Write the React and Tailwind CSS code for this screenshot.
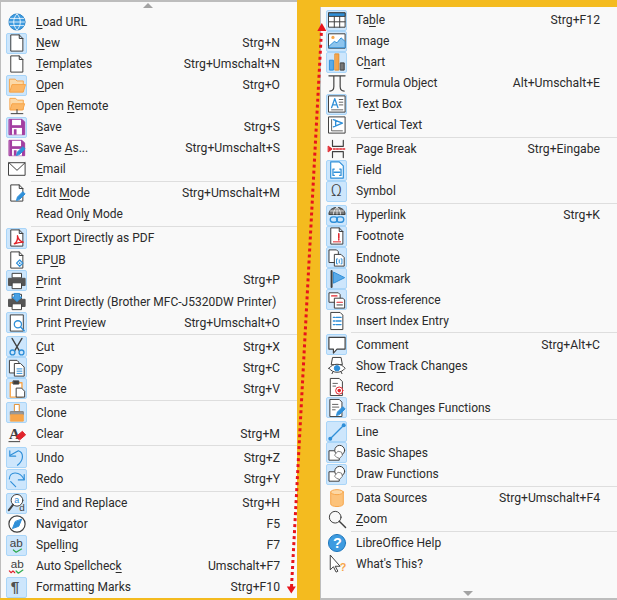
import React from 'react';

const D = '#404040';
const B = '#2f8fd8';
const O = '#f7a54a';
const P = '#a33ea1';
const R = '#e0242c';

const Ic = ({ children }) => (
  <svg className="shrink-0 overflow-visible" width="18" height="18" viewBox="0 0 20 20" fill="none" stroke={D} strokeWidth="1.100" strokeLinejoin="round" strokeLinecap="round">
    {children}
  </svg>
);

const Doc = () => <path d="M3.500 1h9l4 4v14h-13zM12.500 1v4h4" fill="#fff" />;
const Pencil = () => <path d="M9.500 18l1-3.500 6-6 2.500 2.500-6 6z" fill={B} stroke={B} />;
const Floppy = () => (
  <>
    <path d="M1.500 1.500h14l3 3v14h-17z" fill={P} stroke={P} />
    <rect x="4.500" y="2" width="10" height="6" fill="#fff" stroke="none" />
    <rect x="4.500" y="11" width="11" height="7.500" fill="#fff" stroke="none" />
    <rect x="6.500" y="12.500" width="3" height="6" fill={P} stroke="none" />
  </>
);
const Printer = () => (
  <>
    <path d="M5 1.500h10v5h-10z" fill="#fff" />
    <path d="M1 7h18v8h-3.500v-3h-11v3h-3.500z" fill="#555" stroke="#555" />
    <path d="M5 12h10v6.500h-10z" fill="#fff" />
  </>
);
const Shapes = () => (
  <>
    <rect x="1.500" y="7.500" width="11" height="10.500" fill="#fff" />
    <circle cx="13" cy="7" r="5.500" fill="#fff" />
    <path d="M7.500 12l3.500-4 4 1 1 3.500-3 3.500-3-1z" fill="#fff" stroke={D} strokeWidth=".7" />
  </>
);

const icons = {
  globe: (
    <Ic>
      <circle cx="10" cy="10" r="9" fill="#3d9be0" stroke="#2f86c8" />
      <path d="M1 10h18M2.500 6h15M2.500 14h15M10 1c-5 5-5 13 0 18M10 1c5 5 5 13 0 18" stroke="#fff" strokeWidth=".9" />
    </Ic>
  ),
  doc: <Ic><Doc /></Ic>,
  open: (
    <Ic>
      <path d="M2 3.500h6l2 2h7v12h-15z" fill="#fbd9a8" stroke={O} />
      <path d="M2 17.500l2.500-8h15l-2.500 8z" fill="#fcb766" stroke={O} />
    </Ic>
  ),
  remote: (
    <Ic>
      <path d="M2.500 1.500h6l2 2h6.500v10.500h-14.500z" fill="#fbd9a8" stroke={O} />
      <path d="M2.500 14l2-6.500h14l-2 6.500z" fill="#fcb766" stroke={O} />
      <path d="M10 14v4M3.500 18.500h13" stroke={D} />
    </Ic>
  ),
  save: <Ic><Floppy /></Ic>,
  saveas: <Ic><Floppy /><Pencil /></Ic>,
  email: (
    <Ic>
      <path d="M1 3h18v14h-18z" fill="#fff" />
      <path d="M1 3l9 8.500 9-8.500" />
    </Ic>
  ),
  edit: <Ic><Doc /><Pencil /></Ic>,
  pdf: (
    <Ic>
      <Doc />
      <path d="M7 16.500c3-2 4-5 3.500-9 1 4 3 6.500 6.500 7-3.500 0-6.500 .5-10 2z" stroke={R} strokeWidth="1.400" />
    </Ic>
  ),
  epub: (
    <Ic>
      <Doc />
      <path d="M13 10l3.500 3.500-3.500 3.500-3.500-3.500z" fill="#fff" stroke={B} strokeWidth="1.400" />
      <circle cx="13" cy="13.500" r="1" fill={B} stroke="none" />
    </Ic>
  ),
  print: <Ic><Printer /></Ic>,
  printd: (
    <Ic>
      <Printer />
      <path d="M7 .5h6v4h2.500l-5.500 5-5.500-5h2.500z" fill="#4aa0e2" stroke={B} />
    </Ic>
  ),
  preview: (
    <Ic>
      <path d="M3 1h14v18h-14z" fill="#fff" />
      <circle cx="11" cy="11.500" r="4" fill="#fff" stroke={B} strokeWidth="1.400" />
      <path d="M14 14.500l4 4" stroke={B} strokeWidth="1.600" />
    </Ic>
  ),
  cut: (
    <Ic>
      <path d="M4.500 .5l8 13.500M15.500 .5l-8 13.500" strokeWidth="1.500" />
      <circle cx="5" cy="16" r="2.700" stroke={B} strokeWidth="1.500" />
      <circle cx="15" cy="16" r="2.700" stroke={B} strokeWidth="1.500" />
    </Ic>
  ),
  copy: (
    <Ic>
      <path d="M2 1.500h8l2 2v12h-10z" fill="#fff" />
      <path d="M7.500 5h6.500l4 4v10h-10.500z" fill="#fff" />
      <path d="M10 11h5.500M10 13.500h5.500M10 16h5.500" stroke={B} />
    </Ic>
  ),
  paste: (
    <Ic>
      <path d="M2.500 3h13v16h-13z" fill="#fff" stroke={O} strokeWidth="1.500" />
      <path d="M6 1h6v3.500h-6z" fill={D} stroke={D} />
      <path d="M9.500 9h5.500l3.500 3.500v6.500h-9z" fill="#fff" />
    </Ic>
  ),
  clone: (
    <Ic>
      <path d="M7.500 .5h5v8h-5z" fill="#fff" stroke="#e58f2e" />
      <path d="M3 8.500h14v3.500h-14z" fill="#9a9a9a" stroke="#808080" />
      <path d="M3 12h14v7h-14z" fill={O} stroke={O} />
    </Ic>
  ),
  clear: (
    <Ic>
      <text x="1" y="15" fontFamily="Liberation Serif" fontSize="17" fontWeight="700" fill={D} stroke="none">A</text>
      <path d="M9.500 12.500l6.500-5.500 3.500 4-6.500 5.500z" fill={R} stroke={R} />
      <path d="M1 18.500h12" />
    </Ic>
  ),
  undo: (
    <Ic>
      <path d="M2.500 7l9-5c6 2 6.500 10-1 16" stroke={B} strokeWidth="1.300" />
      <path d="M2 2v6h6.500" stroke={B} strokeWidth="1.300" />
    </Ic>
  ),
  redo: (
    <Ic>
      <path d="M1.500 10c0-8 11-10 16.500 .5" stroke={B} strokeWidth="1.300" />
      <path d="M18 5v6h-6.500" stroke={B} strokeWidth="1.300" />
      <path d="M3 13l5.500 5.500" stroke={B} strokeWidth="1.300" />
    </Ic>
  ),
  find: (
    <Ic>
      <circle cx="10" cy="7" r="6.500" fill="#fff" />
      <path d="M5.500 12l-4.500 6" strokeWidth="2.200" />
      <text x="7" y="10.500" fontFamily="Liberation Sans" fontSize="10" fill={B} stroke="none">a</text>
      <text x="12.500" y="19" fontFamily="Liberation Sans" fontSize="11" fill={D} stroke="none">d</text>
    </Ic>
  ),
  nav: (
    <Ic>
      <circle cx="10" cy="10" r="9" fill="#fff" strokeWidth="1.300" />
      <path d="M15 5l-3 7.500-7 2.500 3-7.500z" fill={B} stroke={B} />
    </Ic>
  ),
  spell: (
    <Ic>
      <text x="2" y="12" fontFamily="Liberation Sans" fontSize="13" fill={D} stroke="none">ab</text>
      <path d="M6 15.500l3 2.500 6-3.500" stroke="#2eab4f" strokeWidth="1.400" />
    </Ic>
  ),
  auto: (
    <Ic>
      <text x="3" y="12" fontFamily="Liberation Sans" fontSize="13" fill={D} stroke="none">ab</text>
      <path d="M1.500 15.500l2 2 2-2 2 2" stroke={R} strokeWidth="1.300" />
      <path d="M9 15.500l2.500 2.500 5-3.500" stroke="#2eab4f" strokeWidth="1.400" />
    </Ic>
  ),
  marks: (
    <Ic>
      <text x="3" y="16" fontFamily="Liberation Sans" fontSize="17" fontWeight="700" fill="#505050" stroke="none">¶</text>
    </Ic>
  ),
  table: (
    <Ic>
      <path d="M1 2h18v16h-18z" fill="#fff" />
      <path d="M1 2h18v4h-18z" fill={B} stroke={D} />
      <path d="M1 12h18M7 6v12M13 6v12" />
    </Ic>
  ),
  image: (
    <Ic>
      <path d="M1 2h18v16h-18z" fill="#fff" />
      <circle cx="5.500" cy="6" r="1.800" fill={O} stroke="none" />
      <path d="M1.500 15.500l5.500-5 3 1.500 4.500-5.500 4.500 4v7h-17.500z" fill="#8cc4ee" stroke={B} />
    </Ic>
  ),
  chart: (
    <Ic>
      <path d="M2 8h4v11h-4z" fill="#5aaae8" stroke={B} />
      <path d="M8 1h4v18h-4z" fill={O} stroke="#e58f2e" />
      <path d="M14 11h4v8h-4z" fill="#777" stroke={D} />
    </Ic>
  ),
  formula: (
    <Ic>
      <path d="M1 2h18M6.500 2v12c0 3.500-1.500 5-4.500 5M13.500 2v12c0 3.500 1.500 5 4.500 5" strokeWidth="1.300" />
    </Ic>
  ),
  textbox: (
    <Ic>
      <path d="M1 1h18v18h-18z" fill="#fff" />
      <path d="M4 14l3.500-10 3.500 10M5 11h5" stroke={B} strokeWidth="1.500" />
      <path d="M12.500 5h4M12.500 8h4M12.500 11h4M4 16.500h12.500" stroke={D} strokeWidth=".9" />
    </Ic>
  ),
  vertical: (
    <Ic>
      <path d="M1 1h18v18h-18z" fill="#fff" />
      <path d="M6 4l10 4-10 4M8.500 5v6" stroke={B} strokeWidth="1.500" />
      <path d="M4 4v12.500h12" stroke={D} strokeWidth=".9" />
    </Ic>
  ),
  pagebreak: (
    <Ic>
      <path d="M5 .5v6.500h12v-6.500M5 19.500v-6.500h12v6.500" strokeWidth="1.300" />
      <path d="M6 10h13" stroke={R} strokeWidth="1.600" strokeDasharray="2 1.500" />
      <path d="M.5 7l4 3-4 3z" fill={R} stroke={R} />
    </Ic>
  ),
  field: (
    <Ic>
      <path d="M3 1h9.500l4.500 4.500v13.500h-14z" fill="#fff" stroke={B} strokeWidth="1.300" />
      <path d="M7 9h-1.500v7h1.500M13 9h1.500v7h-1.500M7 12.500h6" stroke={B} strokeWidth="1.400" />
    </Ic>
  ),
  symbol: (
    <Ic>
      <text x="3" y="16" fontFamily="Roboto" fontWeight="300" fontSize="19" fill={D} stroke="none">Ω</text>
    </Ic>
  ),
  link: (
    <Ic>
      <path d="M1 9c0-10 18-10 18 0z" fill="#777" stroke={D} />
      <path d="M10 1v8M6 9c0-4 2.500-6 4-8 1.500 2 4 4 4 8M2.500 5.500h15" stroke="#fff" strokeWidth=".8" />
      <rect x="2.500" y="12" width="8" height="6" rx="3" stroke={B} strokeWidth="1.500" />
      <rect x="9.500" y="12" width="8" height="6" rx="3" stroke={B} strokeWidth="1.500" />
    </Ic>
  ),
  footnote: (
    <Ic>
      <Doc />
      <path d="M12 7.500v5M12 14v.5" stroke={R} strokeWidth="1.700" />
      <path d="M6 16.500h8" stroke={R} />
    </Ic>
  ),
  endnote: (
    <Ic>
      <path d="M1.500 1h8l2 2v12h-10z" fill="#fff" />
      <path d="M7.500 6h7l3.500 3.500v9.500h-10.500z" fill="#fff" />
      <path d="M10.500 11h-1v5.500h1M14.500 11h1v5.500h-1M12.500 12v3.500" stroke={B} />
    </Ic>
  ),
  bookmark: (
    <Ic>
      <path d="M4 1v18" strokeWidth="2.200" />
      <path d="M6.500 2.500l12 6-12 6z" fill="#5aaae8" stroke={B} />
    </Ic>
  ),
  crossref: (
    <Ic>
      <path d="M1.500 2h10l2 2v8.500h-12z" fill="#fff" />
      <path d="M7.500 8h9l2 2v9h-11z" fill="#fff" />
      <path d="M4 5.500h6M10 12.500h6" stroke={R} strokeWidth="1.300" />
      <path d="M10 15.500h6" stroke={D} />
    </Ic>
  ),
  index: (
    <Ic>
      <path d="M3.500 .5h10l3 3v16h-13z" fill="#fff" />
      <path d="M6 6h1.500M9 6h5.500M6 10h1.500M9 10h5.500M6 14h1.500M9 14h5.500" stroke={B} strokeWidth="1.500" />
    </Ic>
  ),
  comment: (
    <Ic>
      <path d="M1 1.500h18v13h-9l-4 4.500v-4.500h-5z" fill="#fff" strokeWidth="1.300" />
    </Ic>
  ),
  showtrack: (
    <Ic>
      <path d="M5.500 .5h9l1.500 8h-12z" fill="#fff" />
      <path d="M1 12.500c4.500-6 13.500-6 18 0-4.500 6-13.500 6-18 0z" fill="#fff" />
      <circle cx="10" cy="12.500" r="3" fill={B} stroke={B} />
      <path d="M4.500 18.500l1-2M15.500 18.500l-1-2" />
    </Ic>
  ),
  record: (
    <Ic>
      <path d="M3 .5h9.500l3.500 3.500v15.500h-13z" fill="#fff" />
      <path d="M5.500 6h5M5.500 9h3" stroke={D} strokeWidth=".9" />
      <circle cx="12.500" cy="14" r="4" fill="#fff" stroke={R} />
      <circle cx="12.500" cy="14" r="2" fill={R} stroke="none" />
    </Ic>
  ),
  trackfn: (
    <Ic>
      <path d="M2.500 .5h10l3 3v16h-13z" fill="#fff" />
      <path d="M5 6h6M5 9h7M5 12h3" stroke={D} strokeWidth=".9" />
      <Pencil />
    </Ic>
  ),
  line: (
    <Ic>
      <path d="M2.500 17.500l15-15" stroke={B} strokeWidth="1.500" />
      <circle cx="2.500" cy="17.500" r="2.200" fill={B} stroke="none" />
      <circle cx="17.500" cy="2.500" r="2.200" fill={B} stroke="none" />
    </Ic>
  ),
  shapes: <Ic><Shapes /></Ic>,
  data: (
    <Ic>
      <path d="M3 3.500v13c0 4 14 4 14 0v-13z" fill="#fcc27a" stroke={O} />
      <ellipse cx="10" cy="3.500" rx="7" ry="2.800" fill="#fdd7a3" stroke={O} />
    </Ic>
  ),
  zoom: (
    <Ic>
      <circle cx="8" cy="8" r="6.500" />
      <path d="M12.500 12.500l7 7" strokeWidth="1.600" />
    </Ic>
  ),
  help: (
    <Ic>
      <circle cx="10" cy="10" r="9.500" fill="#3d9be0" stroke="#1f76bb" />
      <text x="5.500" y="15.500" fontFamily="Liberation Sans" fontSize="16" fontWeight="700" fill="#fff" stroke="none">?</text>
    </Ic>
  ),
  whats: (
    <Ic>
      <path d="M2.500 .5v16l3.500-3.500 3 6 2-1-3-5.500h5z" fill="#fff" />
      <text x="13" y="18" fontFamily="Liberation Sans" fontSize="12" fontWeight="700" fill={O} stroke="none">?</text>
    </Ic>
  ),
};

// a leading _ marks the mnemonic letter
const leftMenu = [
  [
    { t: '_Load URL', i: 'globe' },
    { t: '_New', k: 'Strg+N', i: 'doc', on: true },
    { t: '_Templates', k: 'Strg+Umschalt+N', i: 'doc' },
    { t: '_Open', k: 'Strg+O', i: 'open', on: true },
    { t: 'Open _Remote', i: 'remote' },
    { t: '_Save', k: 'Strg+S', i: 'save', on: true },
    { t: 'Save _As...', k: 'Strg+Umschalt+S', i: 'saveas' },
    { t: '_Email', i: 'email' },
  ],
  [
    { t: 'Edit _Mode', k: 'Strg+Umschalt+M', i: 'edit' },
    { t: 'Read Onl_y Mode' },
  ],
  [
    { t: 'Export _Directly as PDF', i: 'pdf', on: true },
    { t: 'EP_UB', i: 'epub' },
    { t: '_Print', k: 'Strg+P', i: 'print', on: true },
    { t: 'Print Directly (Brother MFC-J5320DW Printer)', i: 'printd' },
    { t: 'Print Pre_view', k: 'Strg+Umschalt+O', i: 'preview', on: true },
  ],
  [
    { t: '_Cut', k: 'Strg+X', i: 'cut', on: true },
    { t: 'Copy', k: 'Strg+C', i: 'copy', on: true },
    { t: 'Paste', k: 'Strg+V', i: 'paste', on: true },
  ],
  [
    { t: 'Clone', i: 'clone', on: true },
    { t: 'Clear', k: 'Strg+M', i: 'clear' },
  ],
  [
    { t: 'Undo', k: 'Strg+Z', i: 'undo', on: true },
    { t: 'Redo', k: 'Strg+Y', i: 'redo', on: true },
  ],
  [
    { t: '_Find and Replace', k: 'Strg+H', i: 'find', on: true },
    { t: 'Navi_gator', k: 'F5', i: 'nav' },
    { t: 'Spell_ing', k: 'F7', i: 'spell', on: true },
    { t: 'Auto Spellchec_k', k: 'Umschalt+F7', i: 'auto' },
    { t: 'Formatting Marks', k: 'Strg+F10', i: 'marks', on: true },
  ],
];

const rightMenu = [
  [
    { t: 'Ta_ble', k: 'Strg+F12', i: 'table', on: true },
    { t: 'Image', i: 'image', on: true },
    { t: 'C_hart', i: 'chart', on: true },
    { t: 'Formula Object', k: 'Alt+Umschalt+E', i: 'formula' },
    { t: 'Te_xt Box', i: 'textbox', on: true },
    { t: 'Vertical Text', i: 'vertical' },
  ],
  [
    { t: 'Page Break', k: 'Strg+Eingabe', i: 'pagebreak' },
    { t: 'Field', i: 'field', on: true },
    { t: 'Symbol', i: 'symbol', on: true },
  ],
  [
    { t: 'Hyperlink', k: 'Strg+K', i: 'link', on: true },
    { t: 'Footnote', i: 'footnote', on: true },
    { t: 'Endnote', i: 'endnote', on: true },
    { t: 'Bookmark', i: 'bookmark', on: true },
    { t: 'Cross-reference', i: 'crossref', on: true },
    { t: 'Insert Index Entry', i: 'index' },
  ],
  [
    { t: 'Comment', k: 'Strg+Alt+C', i: 'comment', on: true },
    { t: 'Sho_w Track Changes', i: 'showtrack' },
    { t: 'Record', i: 'record' },
    { t: 'Track Changes Functions', i: 'trackfn', on: true },
  ],
  [
    { t: 'Line', i: 'line', on: true },
    { t: 'Basic Shapes', i: 'shapes', on: true },
    { t: 'Draw Functions', i: 'shapes', on: true },
  ],
  [
    { t: 'Data Sources', k: 'Strg+Umschalt+F4', i: 'data' },
    { t: '_Zoom', i: 'zoom' },
  ],
  [
    { t: 'LibreOffice Help', i: 'help' },
    { t: "What's This?", i: 'whats' },
  ],
];

function Label({ text }) {
  const at = text.indexOf('_');
  if (at < 0) return <span>{text}</span>;
  return (
    <span>
      {text.slice(0, at)}
      <u className="underline-offset-2">{text[at + 1]}</u>
      {text.slice(at + 2)}
    </span>
  );
}

function Row({ item }) {
  return (
    <div className="flex h-[21.05px] items-center pl-[5px] pr-[17px] text-[12px] text-[#2b2b2b]">
      <div className={`flex h-[21px] w-[21px] shrink-0 items-center justify-center rounded-[2px] border ${item.on ? 'border-[#a9d5f8] bg-[#cde6fc]' : 'border-transparent'}`}>
        {item.i && icons[item.i]}
      </div>
      <div className="ml-[9px] flex-1 whitespace-nowrap"><Label text={item.t} /></div>
      {item.k && <div className="whitespace-nowrap text-[12.2px]">{item.k}</div>}
    </div>
  );
}

function Menu({ groups, className, children }) {
  return (
    <div className={`relative flex w-[297px] flex-col bg-[#f9f9f9] ${className}`}>
      {groups.map((g, n) => (
        <div key={n} className={n > 0 ? 'ml-[30px] mt-px border-t border-[#dedede] pt-px' : ''}>
          <div className={n > 0 ? 'ml-[-30px]' : ''}>
            {g.map((item) => <Row key={item.t} item={item} />)}
          </div>
        </div>
      ))}
      {children}
    </div>
  );
}

export default function App() {
  return (
    <div className="relative flex h-[600px] w-[617px] justify-between overflow-hidden bg-[#f4bb1f] font-['Roboto',sans-serif]">
      <Menu groups={leftMenu} className="h-[598px] border-l border-t-2 border-[#bdbdbd] pt-[9.5px]">
        <div className="absolute left-[142px] top-[1px] h-0 w-0 border-x-[5px] border-b-[5px] border-x-transparent border-b-[#a3a3a3]" />
      </Menu>
      <Menu groups={rightMenu} className="mt-[7px] h-[593px] border-b-2 border-l border-[#bdbdbd] pt-[2.5px]">
        <div className="absolute bottom-[2px] left-[142px] h-0 w-0 border-x-[5px] border-t-[5px] border-x-transparent border-t-[#a3a3a3]" />
      </Menu>
      <svg className="pointer-events-none absolute left-0 top-0" width="617" height="600">
        <path d="M291.500 587L321.500 30" stroke="#e8141c" strokeWidth="3" strokeDasharray="3 3" fill="none" />
        <path d="M321.800 23l4.500 8h-9z" fill="#e8141c" />
        <path d="M291.300 593.500l-4.500-7h9z" fill="#e8141c" />
      </svg>
    </div>
  );
}
